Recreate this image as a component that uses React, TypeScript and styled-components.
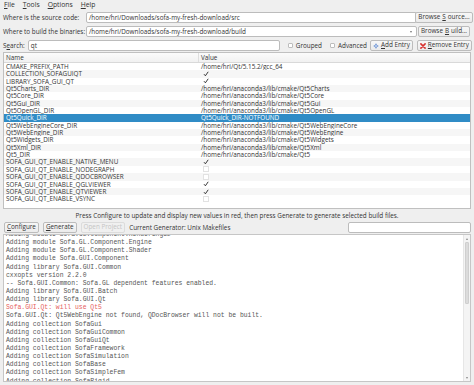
import React, { useLayoutEffect, useRef } from "react";
import styled, { createGlobalStyle } from "styled-components";

const UI_FONT = `"Open Sans", "Noto Sans", "DejaVu Sans", sans-serif`;
const MONO_FONT = `"Liberation Mono", "DejaVu Sans Mono", monospace`;
const FS = 6.35;
const ROW_H = 7.35;

const GlobalStyle = createGlobalStyle`
  html, body { margin: 0; padding: 0; }
  body {
    background: #efefef;
    font-family: ${UI_FONT};
    font-size: ${FS}px;
    color: #2e2e2e;
  }
  * { box-sizing: border-box; }
`;

const Window = styled.div`
  width: 474px;
  height: 385px;
  display: flex;
  flex-direction: column;
  padding: 0 3px 3px;
  background: #efefef;
  overflow: hidden;
`;

const MenuBar = styled.div`
  display: flex;
  align-items: center;
  height: 10px;
  padding-left: 1px;
  gap: 8px;
`;

const MenuItem = styled.span`
  color: #333;
  line-height: 10px;
  font-size: 6.8px;
`;

const Mn = styled.span`
  text-decoration: underline;
  text-underline-offset: 1px;
`;

const PathGrid = styled.div`
  display: grid;
  grid-template-columns: 83px 1fr 54px;
  grid-auto-rows: 11px;
  row-gap: 3px;
  align-items: center;
  margin-top: 2px;
`;

const Label = styled.span`
  color: #333;
  white-space: nowrap;
`;

const Field = styled.div`
  height: 11px;
  display: flex;
  align-items: center;
  background: #fff;
  border: 1px solid #bcbcbc;
  border-radius: 2px;
  padding: 0 2px;
  color: #333;
  white-space: nowrap;
  overflow: hidden;
`;

const FieldText = styled.span`
  flex: 1;
`;

const ComboArrow = styled.span`
  width: 0;
  height: 0;
  border-left: 1.5px solid transparent;
  border-right: 1.5px solid transparent;
  border-top: 2px solid #777;
  margin-right: 2px;
`;

const Button = styled.button<{ $disabled?: boolean }>`
  height: 11px;
  display: inline-flex;
  align-items: center;
  justify-content: center;
  gap: 2px;
  padding: 0 2px;
  font-family: ${UI_FONT};
  font-size: ${FS}px;
  color: ${(p) => (p.$disabled ? "#c4c4c4" : "#333")};
  background: ${(p) => (p.$disabled ? "#f0f0f0" : "linear-gradient(#f7f7f7, #ebebeb)")};
  border: 1px solid ${(p) => (p.$disabled ? "#dcdcdc" : "#bcbcbc")};
  border-radius: 2px;
  white-space: nowrap;
  line-height: 1;
  justify-self: center;
`;

const SearchRow = styled.div`
  display: flex;
  align-items: center;
  height: 11px;
  margin-top: 3px;
  gap: 3px;
`;

const SearchField = styled(Field)`
  width: 252px;
  flex: none;
`;

const CheckOption = styled.label`
  display: inline-flex;
  align-items: center;
  gap: 3px;
  color: #333;
  margin-left: 5px;
`;

const SmallBox = styled.span`
  width: 5px;
  height: 5px;
  border: 1px solid #bdbdbd;
  background: #fff;
  border-radius: 1px;
`;

const EntryButtons = styled.div`
  display: flex;
  gap: 4px;
  margin-left: auto;
`;

const Table = styled.div`
  margin-top: 1px;
  height: 157px;
  background: #fff;
  border: 1px solid #c0c0c0;
  display: flex;
  flex-direction: column;
  overflow: hidden;
`;

const HeaderRow = styled.div`
  display: grid;
  grid-template-columns: 195px 1fr;
  height: 10px;
  background: linear-gradient(#fbfbfb, #f1f1f1);
  border-bottom: 1px solid #d9d9d9;
  flex: none;
`;

const HeaderCell = styled.div<{ $divider?: boolean }>`
  display: flex;
  align-items: center;
  padding-left: 2px;
  color: #333;
  ${(p) => (p.$divider ? "border-right: 1px solid #dedede;" : "")}
`;

const Row = styled.div<{ $odd: boolean; $selected: boolean }>`
  display: grid;
  grid-template-columns: 195px 1fr;
  height: ${ROW_H}px;
  flex: none;
  align-items: center;
  background: ${(p) => (p.$selected ? "#308cc6" : p.$odd ? "#f6f6f6" : "#fff")};
  color: ${(p) => (p.$selected ? "#fff" : "#333")};
  line-height: ${ROW_H}px;
  white-space: nowrap;
`;

const Cell = styled.div`
  padding-left: 2px;
  display: flex;
  align-items: center;
  height: ${ROW_H}px;
`;

const ValueBox = styled.span<{ $checked: boolean }>`
  width: 6px;
  height: 6px;
  margin-left: 2px;
  display: inline-flex;
  align-items: center;
  justify-content: center;
  border: 1px solid ${(p) => (p.$checked ? "transparent" : "#e2e2e2")};
  background: ${(p) => (p.$checked ? "transparent" : "#fff")};
`;

const Message = styled.div`
  height: 13px;
  display: flex;
  align-items: center;
  justify-content: center;
  color: #333;
`;

const ActionRow = styled.div`
  display: flex;
  align-items: center;
  gap: 4px;
  height: 11px;
  padding-left: 1px;
`;

const GeneratorLabel = styled.span`
  color: #333;
`;

const GeneratorField = styled(Field)`
  width: 123px;
  margin-left: auto;
`;

const LogBox = styled.div`
  margin-top: 1px;
  flex: 1;
  min-height: 0;
  display: flex;
  background: #fff;
  border: 1px solid #c6c6c6;
`;

const LogText = styled.div`
  flex: 1;
  overflow: hidden;
  padding: 2px 2px 0;
  font-family: ${MONO_FONT};
  font-size: 6.4px;
  color: #555;
  white-space: pre;
`;

const LogLine = styled.div<{ $error?: boolean }>`
  height: 8.15px;
  line-height: 8.15px;
  color: ${(p) => (p.$error ? "#e65d5d" : "#555")};
`;

const ScrollBar = styled.div`
  width: 7px;
  display: flex;
  flex-direction: column;
  background: #f4f4f4;
  border-left: 1px solid #e6e6e6;
`;

const ScrollArrow = styled.div<{ $down?: boolean }>`
  height: 7px;
  display: flex;
  align-items: center;
  justify-content: center;
  &::before {
    content: "";
    width: 0;
    height: 0;
    border-left: 1.5px solid transparent;
    border-right: 1.5px solid transparent;
    ${(p) => (p.$down ? "border-top: 2px solid #888;" : "border-bottom: 2px solid #888;")}
  }
`;

const ScrollTrack = styled.div`
  flex: 1;
  padding: 0 1px;
  display: flex;
  flex-direction: column;
`;

const ScrollThumb = styled.div<{ $h: number }>`
  height: ${(p) => p.$h}px;
  background: #dcdcdc;
  border: 1px solid #cfcfcf;
  border-radius: 1px;
`;

const IconSvg = styled.svg`
  width: 6px;
  height: 6px;
  flex: none;
`;

const CheckIcon = () => (
  <IconSvg viewBox="0 0 6 6">
    <path d="M1 3.2 L2.4 4.8 L5.2 0.8" fill="none" stroke="#222" strokeWidth="0.9" />
  </IconSvg>
);

const AddIcon = () => (
  <IconSvg viewBox="0 0 10 10">
    <path
      d="M5 0.5 L6.6 3.4 L9.5 5 L6.6 6.6 L5 9.5 L3.4 6.6 L0.5 5 L3.4 3.4 Z"
      fill="#3a6fc7"
    />
    <path d="M5 2.5 V7.5 M2.5 5 H7.5" stroke="#fff" strokeWidth="1.2" />
  </IconSvg>
);

const RemoveIcon = () => (
  <IconSvg viewBox="0 0 10 10">
    <path d="M1.5 1.5 L8.5 8.5 M8.5 1.5 L1.5 8.5" stroke="#d8322f" strokeWidth="2.6" strokeLinecap="round" />
  </IconSvg>
);

type Entry = { name: string; value?: string; check?: boolean };

const BASE = "/home/hri/anaconda3/lib/cmake/";
const entries: Entry[] = [
  { name: "CMAKE_PREFIX_PATH", value: "/home/hri/Qt/5.15.2/gcc_64" },
  { name: "COLLECTION_SOFAGUIQT", check: true },
  { name: "LIBRARY_SOFA_GUI_QT", check: true },
  { name: "Qt5Charts_DIR", value: BASE + "Qt5Charts" },
  { name: "Qt5Core_DIR", value: BASE + "Qt5Core" },
  { name: "Qt5Gui_DIR", value: BASE + "Qt5Gui" },
  { name: "Qt5OpenGL_DIR", value: BASE + "Qt5OpenGL" },
  { name: "Qt5Quick_DIR", value: "Qt5Quick_DIR-NOTFOUND" },
  { name: "Qt5WebEngineCore_DIR", value: BASE + "Qt5WebEngineCore" },
  { name: "Qt5WebEngine_DIR", value: BASE + "Qt5WebEngine" },
  { name: "Qt5Widgets_DIR", value: BASE + "Qt5Widgets" },
  { name: "Qt5Xml_DIR", value: BASE + "Qt5Xml" },
  { name: "Qt5_DIR", value: BASE + "Qt5" },
  { name: "SOFA_GUI_QT_ENABLE_NATIVE_MENU", check: true },
  { name: "SOFA_GUI_QT_ENABLE_NODEGRAPH", check: false },
  { name: "SOFA_GUI_QT_ENABLE_QDOCBROWSER", check: false },
  { name: "SOFA_GUI_QT_ENABLE_QGLVIEWER", check: true },
  { name: "SOFA_GUI_QT_ENABLE_QTVIEWER", check: true },
  { name: "SOFA_GUI_QT_ENABLE_VSYNC", check: false },
];
const SELECTED = 7;

const logLines: { text: string; error?: boolean }[] = [
  { text: "Adding module Sofa.GL.Component.Rendering3D" },
  { text: "Adding module Sofa.GL.Component.Engine" },
  { text: "Adding module Sofa.GL.Component.Shader" },
  { text: "Adding module Sofa.GUI.Component" },
  { text: "Adding library Sofa.GUI.Common" },
  { text: "cxxopts version 2.2.0" },
  { text: "-- Sofa.GUI.Common: Sofa.GL dependent features enabled." },
  { text: "Adding library Sofa.GUI.Batch" },
  { text: "Adding library Sofa.GUI.Qt" },
  { text: "Sofa.GUI.Qt: will use Qt5", error: true },
  { text: "Sofa.GUI.Qt: Qt5WebEngine not found, QDocBrowser will not be built." },
  { text: "Adding collection SofaGui" },
  { text: "Adding collection SofaGuiCommon" },
  { text: "Adding collection SofaGuiQt" },
  { text: "Adding collection SofaFramework" },
  { text: "Adding collection SofaSimulation" },
  { text: "Adding collection SofaBase" },
  { text: "Adding collection SofaSimpleFem" },
  { text: "Adding collection SofaRigid" },
];

export default function App() {
  const logRef = useRef<HTMLDivElement>(null);
  useLayoutEffect(() => {
    if (logRef.current) logRef.current.scrollTop = 6;
  }, []);

  return (
    <>
      <GlobalStyle />
      <Window>
        <MenuBar>
          <MenuItem><Mn>F</Mn>ile</MenuItem>
          <MenuItem><Mn>T</Mn>ools</MenuItem>
          <MenuItem><Mn>O</Mn>ptions</MenuItem>
          <MenuItem><Mn>H</Mn>elp</MenuItem>
        </MenuBar>

        <PathGrid>
          <Label>Where is the source code:</Label>
          <Field>
            <FieldText>/home/hri/Downloads/sofa-my-fresh-download/src</FieldText>
          </Field>
          <Button>Browse <Mn>S</Mn>ource...</Button>
          <Label>Where to build the binaries:</Label>
          <Field>
            <FieldText>/home/hri/Downloads/sofa-my-fresh-download/build</FieldText>
            <ComboArrow />
          </Field>
          <Button>Browse <Mn>B</Mn>uild...</Button>
        </PathGrid>

        <SearchRow>
          <Label>S<Mn>e</Mn>arch:</Label>
          <SearchField>
            <FieldText>qt</FieldText>
          </SearchField>
          <CheckOption><SmallBox />Grouped</CheckOption>
          <CheckOption><SmallBox />Advanced</CheckOption>
          <EntryButtons>
            <Button><AddIcon /><span><Mn>A</Mn>dd Entry</span></Button>
            <Button><RemoveIcon /><span><Mn>R</Mn>emove Entry</span></Button>
          </EntryButtons>
        </SearchRow>

        <Table>
          <HeaderRow>
            <HeaderCell $divider>Name</HeaderCell>
            <HeaderCell>Value</HeaderCell>
          </HeaderRow>
          {entries.map((e, i) => (
            <Row key={e.name} $odd={i % 2 === 1} $selected={i === SELECTED}>
              <Cell>{e.name}</Cell>
              <Cell>
                {e.check === undefined ? (
                  e.value
                ) : (
                  <ValueBox $checked={e.check}>{e.check && <CheckIcon />}</ValueBox>
                )}
              </Cell>
            </Row>
          ))}
        </Table>

        <Message>
          Press Configure to update and display new values in red, then press Generate to generate selected build files.
        </Message>

        <ActionRow>
          <Button><span><Mn>C</Mn>onfigure</span></Button>
          <Button><span><Mn>G</Mn>enerate</span></Button>
          <Button $disabled>Open Project</Button>
          <GeneratorLabel>Current Generator: Unix Makefiles</GeneratorLabel>
          <GeneratorField />
        </ActionRow>

        <LogBox>
          <LogText ref={logRef}>
            {logLines.map((l, i) => (
              <LogLine key={i} $error={l.error}>{l.text}</LogLine>
            ))}
          </LogText>
          <ScrollBar>
            <ScrollArrow />
            <ScrollTrack>
              <ScrollThumb $h={62} />
            </ScrollTrack>
            <ScrollArrow $down />
          </ScrollBar>
        </LogBox>
      </Window>
    </>
  );
}
